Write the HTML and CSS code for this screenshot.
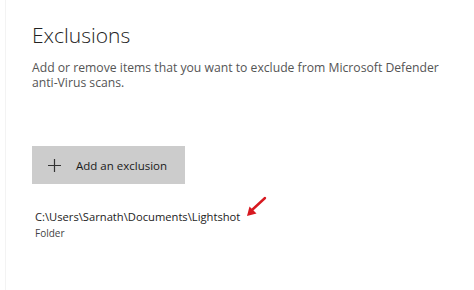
FILE: index.html
```html
<!DOCTYPE html>
<html>
<head>
    <title>Exclusions</title>
    <link rel="stylesheet" href="styles.css">
</head>
<body>
    <div class="page">
        <h1>Exclusions</h1>
        <p class="intro">Add or remove items that you want to exclude from Microsoft Defender anti-Virus scans.</p>

        <button class="add-button" type="button">
            <svg class="plus" width="13" height="13" viewBox="0 0 13 13">
                <path d="M6.5 0 V13 M0 6.5 H13" stroke="#333" stroke-width="1.2" fill="none"/>
            </svg>
            <span>Add an exclusion</span>
        </button>

        <div class="item">
            <div class="item-path">
                <span>C:\Users\Sarnath\Documents\Lightshot</span>
                <!-- red annotation arrow pointing at the path -->
                <svg class="marker" width="22" height="22" viewBox="0 0 22 22">
                    <path d="M20 2 L7 14" stroke="#d71920" stroke-width="2.4" stroke-linecap="round"/>
                    <path d="M2 20 L4.5 10.5 L11.5 17.5 Z" fill="#d71920"/>
                </svg>
            </div>
            <div class="item-type">Folder</div>
        </div>
    </div>
</body>
</html>
```

FILE: styles.css
```css
body {
    margin: 0;
    background-color: white;
    font-family: "Open Sans", "Noto Sans", sans-serif;
}
.page {
    height: 290px;
    margin-left: 5px;
    border-left: 1px solid #f3f3f3;
    padding: 18px 0 0 26px;
    box-sizing: border-box;
}
h1 {
    margin: 0;
    font-size: 21px;
    font-weight: 300;
    color: #222;
    line-height: 34px;
}
.intro {
    margin: 8px 0 0 0;
    width: 430px;
    font-size: 12.2px;
    line-height: 15px;
    color: #555;
}
.add-button {
    display: flex;
    align-items: center;
    margin-top: 56px;
    width: 153px;
    height: 38px;
    padding: 0 0 0 16px;
    border: none;
    background-color: #cccccc;
    font-family: inherit;
    font-size: 11.5px;
    color: #1a1a1a;
    cursor: pointer;
}
.plus {
    margin-right: 15px;
}
.item {
    margin-top: 20px;
    padding-left: 3px;
}
.item-path {
    position: relative;
    display: inline-block;
    font-size: 11.2px;
    line-height: 14px;
    color: #222;
}
.marker {
    position: absolute;
    right: -27px;
    top: -14px;
}
.item-type {
    font-size: 10px;
    line-height: 14px;
    color: #444;
}
```
